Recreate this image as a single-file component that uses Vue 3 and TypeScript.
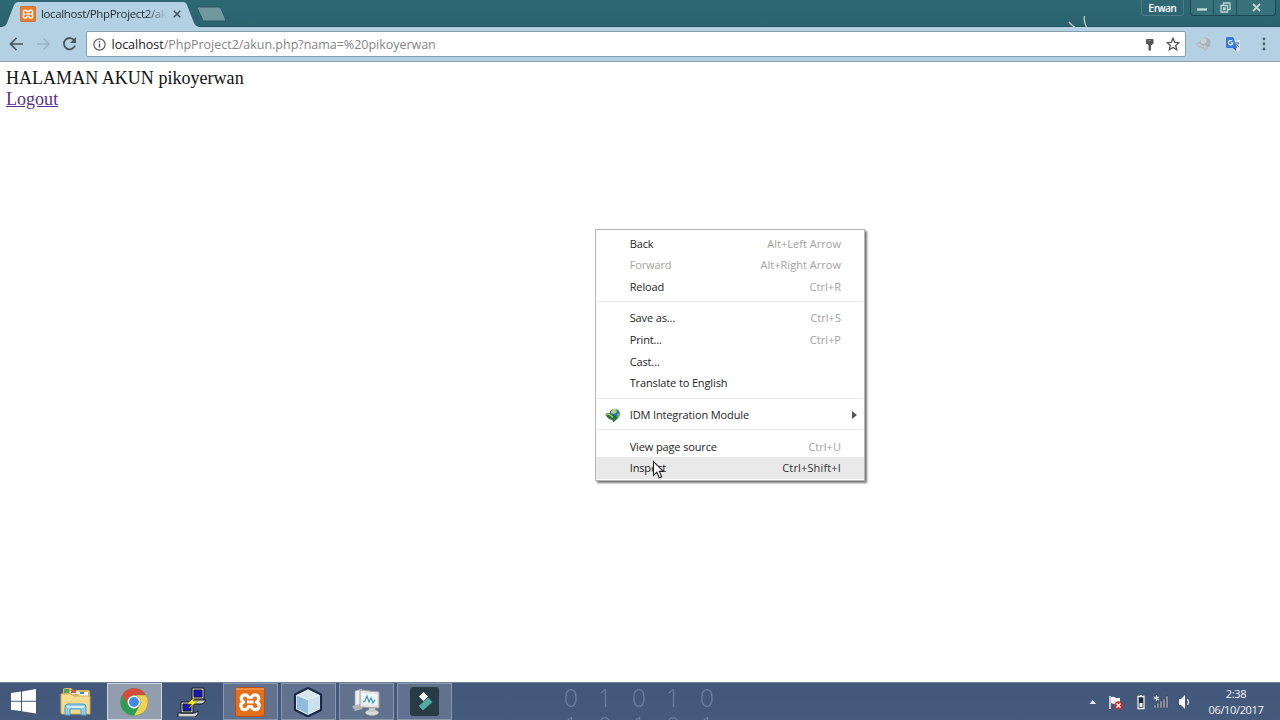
<script setup lang="ts">
interface MenuItem {
  label: string
  shortcut?: string
  disabled?: boolean
  active?: boolean
  submenu?: boolean
}

const groups: MenuItem[][] = [
  [
    { label: 'Back', shortcut: 'Alt+Left Arrow' },
    { label: 'Forward', shortcut: 'Alt+Right Arrow', disabled: true },
    { label: 'Reload', shortcut: 'Ctrl+R' },
  ],
  [
    { label: 'Save as...', shortcut: 'Ctrl+S' },
    { label: 'Print...', shortcut: 'Ctrl+P' },
    { label: 'Cast...' },
    { label: 'Translate to English' },
  ],
  [{ label: 'IDM Integration Module', submenu: true }],
  [
    { label: 'View page source', shortcut: 'Ctrl+U' },
    { label: 'Inspect', shortcut: 'Ctrl+Shift+I', active: true },
  ],
]

const digitsTop = ['0', '1', '0', '1', '0']
const digitsBottom = ['1', '0', '1', '0', '1']
</script>

<template>
  <div class="screen">
    <header class="titlebar">
      <div class="tab">
        <svg class="tab-shape" width="208" height="26" viewBox="0 0 208 26">
          <path d="M0 26 C5 26 6 24 7 22 L14 4 Q15.500 1 18 1 H183 Q186 1 187 4 L194 22 Q196 26 200 26Z" fill="#b4d1e3" />
        </svg>
        <svg class="favicon" width="16" height="16" viewBox="0 0 30 30">
          <rect x="1" y="1" width="28" height="28" rx="2" fill="#e8812e" stroke="#c8783e" stroke-width="2" />
          <path d="M13.500 10.500C12 6 5 8 6.500 12.500Q7 14 8.500 15C4 17 6 23.500 10.500 22.500Q13 22 13.500 19.500h3Q17 22 19.500 22.500C24 23.500 26 17 21.500 15Q23 14 23.500 12.500C25 8 18 6 16.500 10.500zM12 15h6.500" fill="none" stroke="#fff" stroke-width="2.700" />
        </svg>
        <span class="tab-title">localhost/PhpProject2/ak</span>
        <svg class="tab-close" width="8" height="8" viewBox="0 0 8 8"><path d="M.7.7 7.300 7.300M7.300.7.7 7.300" stroke="#40525c" stroke-width="1.500" /></svg>
      </div>
      <svg class="new-tab" width="32" height="16" viewBox="0 0 32 16">
        <path d="M2.500 1H23q1.500 0 2 1.500L29.500 13q.5 2-1 2H8.500q-1.500 0-2-1.500L1.500 2.500Q1 1 2.500 1z" fill="#6f989f" stroke="#275a66" />
      </svg>
      <svg class="wisp" width="24" height="11" viewBox="0 0 24 11"><path d="M2 6q3 4 6 5M17.500 0q-1 6 2 11" fill="none" stroke="#b7cec5" stroke-width="1.300" /></svg>
      <div class="profile">Erwan</div>
      <div class="window-controls">
        <span class="control"><svg width="10" height="11" viewBox="0 0 10 11"><path d="M0 7.500H10" stroke="#c3d4d6" stroke-width="2.400" /></svg></span>
        <span class="control"><svg width="11" height="11" viewBox="0 0 11 11"><path d="M3.500 3V1h6.500v6.500H8M1 3.500h6.500V10H1zM3.500 6H5v1.500H3.500z" fill="none" stroke="#c3d4d6" stroke-width="1.300" /></svg></span>
        <span class="control close"><svg width="9" height="9" viewBox="0 0 9 9"><path d="M1 1 8 8M8 1 1 8" stroke="#c3d4d6" stroke-width="1.800" /></svg></span>
      </div>
    </header>

    <nav class="toolbar">
      <svg class="nav-icons" width="78" height="18" viewBox="0 0 78 18">
        <path d="M23 9H11M16.500 3 10.500 9l6 6" fill="none" stroke="#48545b" stroke-width="1.700" />
        <path d="M37 9h12M43.500 3.500 49 9l-5.500 5.500" fill="none" stroke="#99b5c5" stroke-width="1.500" />
        <path d="M74.300 5.500A5.700 5.700 0 1 0 75 10.500" fill="none" stroke="#48545b" stroke-width="1.800" />
        <path d="M76 2v6h-6z" fill="#48545b" />
      </svg>
      <div class="address">
        <svg class="info" width="13" height="13" viewBox="0 0 13 13"><circle cx="6.500" cy="6.500" r="5.600" fill="none" stroke="#5d5d5d" stroke-width="1.200" /><path d="M6.500 5.500v4M6.500 3v1.400" stroke="#5d5d5d" stroke-width="1.500" /></svg>
        <span class="url"><span class="host">localhost</span>/PhpProject2/akun.php?nama=%20pikoyerwan</span>
        <svg class="key" width="9" height="13" viewBox="0 0 9 13"><path d="M1.500 1h6q1 0 1 1v3.500L6.500 7H6v5L4.500 13 3.500 12V7L1 5.500V2z" fill="#555" /><path d="M3.500 2.700h2" stroke="#aaa" /></svg>
        <svg class="star" width="14" height="14" viewBox="0 0 14 14"><path d="m7 1.300 1.700 4 4.200.4-3.200 2.800 1 4.200L7 10.500l-3.700 2.200 1-4.200L1.100 5.700l4.200-.4z" fill="none" stroke="#515151" stroke-width="1.300" /></svg>
      </div>
      <svg class="extension" width="17" height="16" viewBox="0 0 17 16">
        <circle cx="10" cy="7" r="5.500" fill="#a9b2b8" /><circle cx="8.500" cy="5" r="3" fill="#ccd1d4" />
        <path d="M1 8q3-3 5 0l3 2V7l4 4-3 4-1-3q-5 0-8-4z" fill="#c5c8c9" stroke="#9aa5ac" stroke-width=".5" />
      </svg>
      <svg class="translate" width="16" height="16" viewBox="0 0 16 16">
        <path d="M6 4h8q1 0 1 1v9q0 1-1 1H9z" fill="#dbe3e8" />
        <path d="M2 1h6l1 2 3 9H2q-1 0-1-1V2q0-1 1-1z" fill="#3978dc" /><path d="m8 12 3 3v-3z" fill="#2453a8" />
        <path d="M7.300 5.200A2.200 2.200 0 1 0 7.800 7H5.700" fill="none" stroke="#fff" stroke-width="1.100" />
        <path d="M10 7h4M12 6v1M13.500 7q-.5 3-2.500 4M11 8q1 2 3 3" fill="none" stroke="#687e90" />
      </svg>
      <svg class="more" width="4" height="14" viewBox="0 0 4 14"><g fill="#4f5d65"><circle cx="2" cy="2" r="1.400" /><circle cx="2" cy="7" r="1.400" /><circle cx="2" cy="12" r="1.400" /></g></svg>
    </nav>

    <main class="page">
      <div>HALAMAN AKUN pikoyerwan</div>
      <a class="logout">Logout</a>
    </main>

    <div class="menu">
      <div v-for="(group, g) in groups" :key="g" class="group">
        <div v-for="item in group" :key="item.label" class="item" :class="{ disabled: item.disabled, active: item.active }">
          <span class="item-icon">
            <svg v-if="item.submenu" width="16" height="16" viewBox="0 0 16 16">
              <circle cx="9.700" cy="7" r="5.300" fill="#2b6fc0" />
              <path d="M6 4q2-3 5-2l1 3-3 2-3-1z" fill="#b3d56a" /><path d="M12 7l3-1q0 4-3 6z" fill="#75b843" />
              <path d="M.8 7.500Q3 5 5.500 7.500l2.500 2V8l4 3.500-3.500 3.500-.8-2.500Q3 12.500.8 7.500z" fill="#257a35" stroke="#174f27" stroke-width=".6" />
              <path d="M1.500 7.800Q3.500 6 6 8.500l2 2" fill="none" stroke="#b9d551" stroke-width="1.200" />
            </svg>
          </span>
          <span class="label">{{ item.label }}</span>
          <span v-if="item.shortcut" class="shortcut">{{ item.shortcut }}</span>
          <svg v-if="item.submenu" class="arrow" width="5" height="8" viewBox="0 0 5 8"><path d="M0 0 5 4 0 8z" fill="#555" /></svg>
        </div>
      </div>
    </div>
    <svg class="cursor" width="13" height="20" viewBox="0 0 13 20"><path d="M1.500 1.500v14l3.300-3.200 2.500 5.500 2.400-1.100-2.400-5.300h4.200z" fill="#fff" stroke="#222" stroke-width="1.100" /></svg>

    <footer class="taskbar">
      <div class="wallpaper">
        <div class="digits"><span v-for="(d, i) in digitsTop" :key="i">{{ d }}</span></div>
        <div class="digits"><span v-for="(d, i) in digitsBottom" :key="i">{{ d }}</span></div>
      </div>
      <div class="apps">
        <div class="start">
          <svg width="26" height="25" viewBox="0 0 26 25"><path d="M0 4 10 2.500v9.300H0zM11 2.400 25 0v11.800H11zM0 12.700h10V22L0 20.700zM11 12.700h14v11.800L11 22.200z" fill="#fff" /></svg>
        </div>
        <div class="app bare">
          <svg width="32" height="29" viewBox="0 0 32 29">
            <path d="M3 3q0-2 2-2h6l2 2h15q2 0 2 2v20H2z" fill="#d9b760" />
            <path d="M4 2h5v4H4z" fill="#4aa65a" /><path d="M10 4h9v3h-9z" fill="#f7f4ec" /><path d="M11 3h5v3h-5z" fill="#d95742" /><path d="M19 5h9v4h-9z" fill="#fff" /><path d="M20 5h4v2h-4z" fill="#4489c8" />
            <path d="M1 7h10l3 2h16v18H2q-1 0-1-2z" fill="#f4dc91" stroke="#d2ac55" />
            <path d="M5 28V20q0-3 3-3h15q3 0 3 3v8h-5v-6H10v6z" fill="#91cde9" stroke="#559cc2" /><path d="M7 20h17" stroke="#d0f0fc" stroke-width="2" />
          </svg>
        </div>
        <div class="app boxed current">
          <svg width="28" height="28" viewBox="0 0 28 28">
            <circle cx="14" cy="14" r="13.700" fill="#2f9e52" />
            <path d="M2.100 7.200A13.700 13.700 0 0 1 25.900 7.200H14A6.800 6.800 0 0 0 8.100 17.400z" fill="#d74b3d" />
            <path d="M25.900 7.200A13.700 13.700 0 0 1 14 27.700L19.900 17.400A6.800 6.800 0 0 0 14 7.200z" fill="#f7cf4c" />
            <circle cx="14" cy="14" r="6.400" fill="#fff" /><circle cx="14" cy="14" r="5" fill="#4688e6" />
          </svg>
        </div>
        <div class="app bare">
          <svg width="30" height="30" viewBox="0 0 30 30">
            <g stroke="#171a20" stroke-width="1">
              <path d="M15 1h12v12H15zM12 15l3-3h13v3l-3 2H12z" fill="#c8ccce" /><path d="M17 3h8v7h-8z" fill="#1618b8" />
              <path d="M4 15h12v11H4zM1 26h17l3-2v3l-3 3H1z" fill="#d1d4d5" /><path d="M6 17h8v7H6z" fill="#1618b8" />
              <path d="m18 10-8 7h5l-3 4 9-7h-5z" fill="#fff52a" stroke="#827b12" stroke-width=".6" />
            </g>
          </svg>
        </div>
        <div class="app boxed">
          <svg width="30" height="30" viewBox="0 0 30 30">
            <rect x=".5" y=".5" width="29" height="29" rx="2" fill="#e56f19" stroke="#b85116" />
            <path d="M1 1h28v2H1z" fill="#f18b45" />
            <path d="M13.500 10.500C12 6 5 8 6.500 12.500Q7 14 8.500 15C4 17 6 23.500 10.500 22.500Q13 22 13.500 19.500h3Q17 22 19.500 22.500C24 23.500 26 17 21.500 15Q23 14 23.500 12.500C25 8 18 6 16.500 10.500zM12 15h6.500" fill="none" stroke="#fff" stroke-width="3.200" stroke-linejoin="round" />
          </svg>
        </div>
        <div class="app boxed">
          <svg width="30" height="30" viewBox="0 0 30 30">
            <path d="M15 1 28 7.500V23L15 29.300 2 23V7.500z" fill="#eff7fb" stroke="#182849" stroke-width="2.200" stroke-linejoin="round" />
            <path d="M4 8.500 15 13.500V27L4 21.500z" fill="#8fbbdc" /><path d="M26 8.500 15 13.500V27l11-5.500z" fill="#c9e0ed" /><path d="M15 3 26 8 15 13 4 8z" fill="#d7e8ec" />
          </svg>
        </div>
        <div class="app boxed">
          <svg width="30" height="28" viewBox="0 0 30 28">
            <path d="M4 3 11 1v20l-7 1z" fill="#eceeed" stroke="#999" stroke-width=".6" /><path d="M1 18l8-2 3 4-8 3z" fill="#b4b6b5" />
            <path d="M9 2 28 4v16L9 19z" fill="#e5e7e5" stroke="#a2a4a2" /><path d="M11 5l15 1v11l-15-1z" fill="#edf8fc" />
            <path d="M12 14l2-1 2-5 2 6 2-4 2 5 2-3" fill="none" stroke="#4697b3" stroke-width="1.200" />
            <ellipse cx="21" cy="24.500" rx="6.500" ry="3" fill="#dadcda" stroke="#aaa" stroke-width=".5" /><path d="M18 20h6v4h-6z" fill="#c5c8c6" />
          </svg>
        </div>
        <div class="app boxed">
          <svg width="29" height="29" viewBox="0 0 29 29">
            <rect width="29" height="29" rx="3" fill="#293b45" />
            <path d="m18 10.500 4.500 4.500-9.500 8.500-4.300-4.500z" fill="#53aaa0" /><path d="m13.500 5 4.500 4.500-4.500 4.500L9 9.500z" fill="#fff" />
          </svg>
        </div>
      </div>
      <div class="tray">
        <svg width="80" height="18" viewBox="0 0 80 18">
          <path d="m.5 11 3.200-4L7 11z" fill="#e8ebf1" />
          <path d="M21 3v13" stroke="#eee" stroke-width="1.500" /><path d="M22 4q3-1 5 1h4v6q-5 1-9-1z" fill="#f4f4f4" /><circle cx="29.500" cy="12.500" r="4.200" fill="#c9322e" /><path d="m27.500 10.500 4 4m0-4-4 4" stroke="#fff" stroke-width="1.300" />
          <path d="M49 3.500h6v12h-6z" fill="#202c3b" stroke="#f2f2f2" stroke-width="1.300" /><path d="M51 2h2v1h-2z" fill="#fff" /><path d="M50.500 10h3v4h-3z" fill="#fff" />
          <path d="m65 6 5-2M65 4l5 3M67.500 2v6" stroke="#ddd" stroke-width="1.100" />
          <g fill="#9da5ad" stroke="#2d394b" stroke-width=".4"><path d="M65 12h2v3h-2zM68 10h2v5h-2zM71 8h2v7h-2zM74 6h2v9h-2zM77 3h2v12h-2z" /></g>
        </svg>
        <svg class="sound" width="12" height="16" viewBox="0 0 12 16"><path d="M0 5h2l4-4v14l-4-4H0z" fill="#f4f5f7" /><path d="M8.500 5q2 3 0 6" fill="none" stroke="#e0e3e8" stroke-width="1.200" /></svg>
        <div class="clock"><span class="time">2:38</span><span class="date">06/10/2017</span></div>
      </div>
    </footer>
  </div>
</template>

<style>
html, body { margin: 0; overflow: hidden; }
</style>

<style scoped>
.screen { position: relative; display: flex; flex-direction: column; width: 1280px; height: 720px; overflow: hidden; background: #fff; font-family: "Open Sans", sans-serif; }
svg { display: block; flex: none; }
.titlebar { display: flex; align-items: flex-start; height: 27px; background: linear-gradient(#2d6873, #2b636f); box-sizing: border-box; border-bottom: 1px solid #22545f; flex: none; }
.tab { position: relative; display: flex; align-items: center; width: 196px; height: 27px; box-sizing: border-box; padding: 1px 0 0 20px; z-index: 1; }
.tab-shape { position: absolute; left: 0; top: 1px; }
.favicon { position: relative; }
.tab-title { position: relative; width: 127px; margin-left: 5px; overflow: hidden; font-size: 11.500px; letter-spacing: -.36px; line-height: 20px; white-space: nowrap; color: #1d2c33; -webkit-mask-image: linear-gradient(90deg, #000 106px, transparent 126px); }
.tab-close { position: relative; margin-left: 5px; }
.new-tab { margin: 6px 0 0; }
.wisp { margin: 16px 0 0 839px; }
.profile { width: 43px; height: 16px; margin-left: auto; box-sizing: border-box; border: 1px solid #4c7d88; border-top: 0; border-radius: 0 0 4px 4px; color: #f4f8f8; font-size: 10px; line-height: 17px; text-align: center; letter-spacing: -.25px; text-shadow: 0 0 1px #fff; }
.window-controls { display: flex; width: 86px; height: 16px; margin: 0 4px 0 6px; box-sizing: border-box; border: 1px solid #194953; border-top: 0; border-radius: 0 0 4px 4px; background: #38717a; }
.control { display: grid; width: 22px; place-items: center; border-right: 1px solid #1d505a; }
.control.close { flex: 1; border: 0; }
.toolbar { display: flex; align-items: center; height: 35px; box-sizing: border-box; border-bottom: 1px solid #8b9fac; background: #b4d1e3; flex: none; }
.nav-icons { width: 78px; }
.address { display: flex; align-items: center; width: 1100px; height: 26px; margin-left: 8px; box-sizing: border-box; border: 1px solid #879eaf; border-radius: 2px; background: #fff; }
.info { margin-left: 6px; }
.url { margin-left: 5.500px; padding-top: 2px; flex: 1; color: #858585; font-size: 12.500px; letter-spacing: -.02px; line-height: 22px; }
.host { color: #222; }
.star { margin: 0 5px 0 12px; }
.extension { margin-left: 9px; }
.translate { margin-left: 13px; }
.more { margin-left: 21px; }
.page { flex: 1; padding: 6px 6px; color: #111; font: 18px/21px "Liberation Serif", serif; letter-spacing: .03px; }
.logout { color: #57308a; text-decoration: underline; }
.menu { position: absolute; left: 595px; top: 229px; width: 270px; height: 252px; box-sizing: border-box; padding: 2.500px 0 0; border: 1px solid #b5b5b5; background: #fff; box-shadow: 2px 2px 2px #777; }
.group + .group::before { content: ""; display: block; height: 1px; margin: 3.700px 1px 5.500px; background: #e6e6e6; }
.item { display: flex; align-items: center; height: 21.600px; font-size: 11px; letter-spacing: -.13px; line-height: 21.600px; color: #242424; white-space: nowrap; }
.item-icon { width: 24.700px; padding-left: 9px; }
.shortcut { margin-left: auto; margin-right: 23px; color: #a1a1a1; letter-spacing: .03px; }
.disabled { color: #a4a49c; }
.active { background: #e9e9e9; }
.active .shortcut { color: #333; letter-spacing: .15px; }
.arrow { margin-left: auto; margin-right: 7px; }
.cursor { position: absolute; left: 652px; top: 460px; }
.taskbar { position: relative; display: flex; height: 38px; box-sizing: border-box; border-top: 1px solid #71819b; background: linear-gradient(#42577a, #455b7d); flex: none; }
.apps { display: flex; align-items: center; gap: 3px; }
.start { width: 46px; padding-left: 11px; box-sizing: border-box; }
.app { display: grid; place-items: center; width: 55px; height: 37px; box-sizing: border-box; padding-right: 1px; }
.boxed { border: 1px solid #8998ae; background: #61728f; }
.current { border-color: #d1d7de; background: #929eae; }
.wallpaper { position: absolute; left: 554px; top: 0; height: 37px; overflow: hidden; color: #7085a6; font: 300 25px/28px "Noto Sans", sans-serif; }
.digits { display: flex; height: 28px; }
.digits span { width: 34px; text-align: center; opacity: .8; }
.tray { display: flex; align-items: center; margin-left: auto; width: 191px; color: #f2f4f7; }
.sound { margin-left: 10px; }
.clock { display: flex; flex-direction: column; width: 60px; margin-left: 15px; align-items: center; font-size: 11px; line-height: 16px; letter-spacing: -.35px; }
</style>
